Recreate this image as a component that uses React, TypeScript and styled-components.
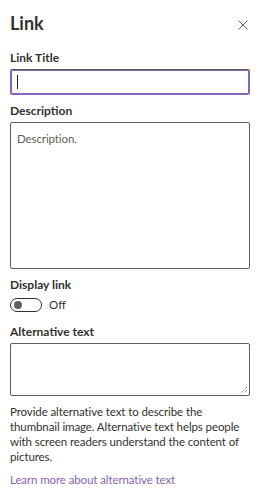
import React from "react";
import styled, { createGlobalStyle } from "styled-components";

const Global = createGlobalStyle`
  html, body { margin: 0; padding: 0; background: #ffffff; }
  body { font-family: Lato, "Noto Sans", sans-serif; color: #323130; }
  * { box-sizing: border-box; }
`;

const Panel = styled.div`
  width: 262px;
  padding: 9px 12px 0 10px;
  display: flex;
  flex-direction: column;
`;

const Header = styled.div`
  display: flex;
  align-items: center;
  justify-content: space-between;
  height: 28px;
  margin-bottom: 13px;
`;

const Title = styled.h1`
  margin: 0;
  font-size: 18px;
  font-weight: 700;
  line-height: 24px;
  color: #323130;
`;

const CloseButton = styled.button`
  border: none;
  background: transparent;
  padding: 0;
  width: 16px;
  height: 16px;
  display: flex;
  align-items: center;
  justify-content: center;
  margin-top: 3px;
  margin-right: -1px;
  cursor: pointer;
`;

const Field = styled.div<{ $gap?: number }>`
  display: flex;
  flex-direction: column;
  margin-bottom: ${(p) => p.$gap ?? 8}px;
`;

const Label = styled.label<{ $gap?: number }>`
  font-size: 12px;
  font-weight: 700;
  line-height: 16px;
  color: #323130;
  margin-bottom: ${(p) => p.$gap ?? 3}px;
`;

const TextInput = styled.div`
  height: 26px;
  border: 1px solid #8764b8;
  border-top-color: #5c5a58;
  box-shadow: inset 0 0 0 1px #8764b8;
  border-radius: 2px;
  display: flex;
  align-items: center;
  padding-left: 6px;
`;

const Caret = styled.span`
  width: 1px;
  height: 14px;
  background: #201f1e;
`;

const TextArea = styled.div<{ $h: number }>`
  position: relative;
  height: ${(p) => p.$h}px;
  border: 1px solid #605e5c;
  border-radius: 2px;
  padding: 8px 6px;
  font-size: 11.5px;
  letter-spacing: -0.1px;
  line-height: 16px;
  color: #605e5c;
`;

const Grip = styled.svg`
  position: absolute;
  right: 1px;
  bottom: 1px;
`;

const ToggleRow = styled.div`
  display: flex;
  align-items: center;
  gap: 7px;
  height: 14px;
  margin-bottom: 12px;
`;

const Track = styled.span`
  width: 32px;
  height: 14px;
  border: 1px solid #323130;
  border-radius: 7px;
  display: flex;
  align-items: center;
  padding-left: 3px;
`;

const Knob = styled.span`
  width: 8px;
  height: 8px;
  border-radius: 50%;
  background: #605e5c;
`;

const ToggleText = styled.span`
  font-size: 11.5px;
  line-height: 16px;
  color: #323130;
`;

const Help = styled.p`
  margin: 8px 0 0 0;
  font-size: 11.5px;
  letter-spacing: -0.1px;
  line-height: 15px;
  color: #323130;
`;

const LearnMore = styled.a`
  display: block;
  margin-top: 8px;
  font-size: 11.5px;
  letter-spacing: -0.1px;
  line-height: 16px;
  color: #8764b8;
  text-decoration: none;
`;

export default function App() {
  return (
    <>
      <Global />
      <Panel>
        <Header>
          <Title>Link</Title>
          <CloseButton aria-label="Close">
            <svg width="10" height="10" viewBox="0 0 10 10">
              <path d="M0.5 0.5 L9.5 9.5 M9.5 0.5 L0.5 9.5" stroke="#605e5c" strokeWidth="1" fill="none" />
            </svg>
          </CloseButton>
        </Header>
        <Field>
          <Label>Link Title</Label>
          <TextInput>
            <Caret />
          </TextInput>
        </Field>
        <Field>
          <Label>Description</Label>
          <TextArea $h={147}>Description.</TextArea>
        </Field>
        <Field $gap={0}>
          <Label $gap={5}>Display link</Label>
          <ToggleRow>
            <Track>
              <Knob />
            </Track>
            <ToggleText>Off</ToggleText>
          </ToggleRow>
        </Field>
        <Field $gap={0}>
          <Label>Alternative text</Label>
          <TextArea $h={53}>
            <Grip width="9" height="9" viewBox="0 0 9 9">
              <path d="M8 2 L2 8 M8 5 L5 8" stroke="#605e5c" strokeWidth="1" strokeDasharray="1 1" fill="none" />
            </Grip>
          </TextArea>
        </Field>
        <Help>
          Provide alternative text to describe the thumbnail image. Alternative text helps people with screen readers understand the content of pictures.
        </Help>
        <LearnMore href="#">Learn more about alternative text</LearnMore>
      </Panel>
    </>
  );
}
